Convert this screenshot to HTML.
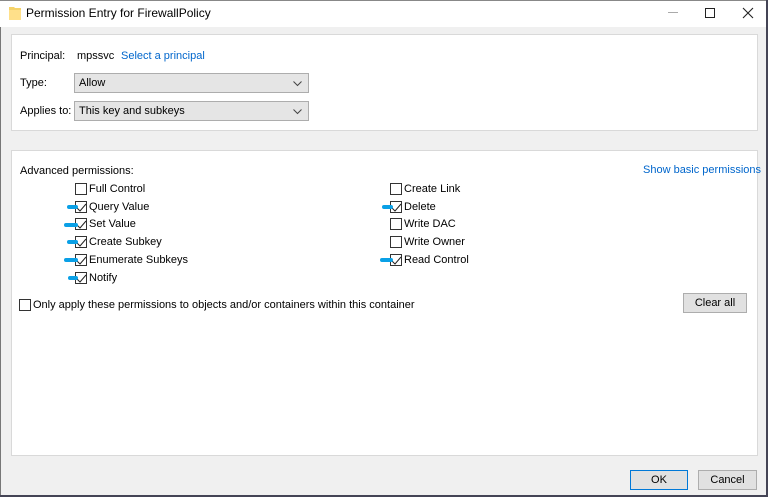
<!DOCTYPE html>
<html><head><meta charset="utf-8"><style>
*{margin:0;padding:0;box-sizing:border-box}
body{width:768px;height:497px;overflow:hidden;background:#f0f0f0;font-family:"Liberation Sans",sans-serif;font-size:11px;color:#000;position:relative}
.a{position:absolute;white-space:nowrap}
.panel{position:absolute;background:#fff;border:1px solid #d9d9d9}
.sel{position:absolute;background:#e5e5e5;border:1px solid #adadad;height:20px;padding:0 4px;line-height:18px;font-size:11px}
.sel svg{position:absolute;right:6px;top:7px}
.cb{position:absolute;width:12px;height:12px;border:1px solid #333;background:#fff}
.cb svg{position:absolute;left:0px;top:0px}
.btn{position:absolute;background:#e1e1e1;border:1px solid #adadad;text-align:center;line-height:18px;height:20px}
.link{color:#0066cc}
.scr{position:absolute;height:4px;background:#0aa0e6;border-radius:3px}
</style></head><body>
<div class="a" style="left:0;top:0;width:768px;height:27px;background:#fff"></div>
<div class="a" style="left:0;top:0;width:768px;height:1px;background:#888"></div>
<div class="a" style="left:0;top:27px;width:1px;height:470px;background:#777"></div>
<div class="a" style="left:766px;top:0;width:2px;height:497px;background:#445"></div>
<div class="a" style="left:0;top:495px;width:768px;height:2px;background:#445"></div>
<svg class="a" style="left:9px;top:6px" width="12" height="14"><path d="M0 1h5l1 1h6v12H0z" fill="#f5d36a"/><path d="M0 4h12v10H0z" fill="#ffe08a"/></svg>
<div class="a" style="left:26px;top:6px;font-size:12px">Permission Entry for FirewallPolicy</div>
<div class="a" style="left:668px;top:12px;width:10px;height:1px;background:#aaa"></div>
<div class="a" style="left:705px;top:8px;width:10px;height:10px;border:1px solid #222"></div>
<svg class="a" style="left:742px;top:7px" width="12" height="12"><path d="M1 1L11 11M11 1L1 11" stroke="#222" stroke-width="1.1"/></svg>

<div class="panel" style="left:11px;top:34px;width:747px;height:97px"></div>
<div class="a" style="left:20px;top:50px">Principal:</div>
<div class="a" style="left:77px;top:50px">mpssvc</div>
<div class="a link" style="left:121px;top:50px">Select a principal</div>
<div class="a" style="left:20px;top:77px">Type:</div>
<div class="sel" style="left:74px;top:73px;width:235px">Allow<svg width="9" height="6"><path d="M0.5 0.5L4.5 4.5L8.5 0.5" stroke="#444" fill="none"/></svg></div>
<div class="a" style="left:20px;top:105px">Applies to:</div>
<div class="sel" style="left:74px;top:101px;width:235px">This key and subkeys<svg width="9" height="6"><path d="M0.5 0.5L4.5 4.5L8.5 0.5" stroke="#444" fill="none"/></svg></div>

<div class="panel" style="left:11px;top:150px;width:747px;height:306px"></div>
<div class="a" style="left:20px;top:165px">Advanced permissions:</div>
<div class="a link" style="left:643px;top:164px">Show basic permissions</div>

<div class="cb" style="left:75px;top:183px"></div><div class="a" style="left:89px;top:183px">Full Control</div>
<div class="cb" style="left:75px;top:201px"><svg width="11" height="11"><path d="M1 6L4 9L10 2" stroke="#222" fill="none"/></svg></div><div class="a" style="left:89px;top:201px">Query Value</div>
<div class="cb" style="left:75px;top:218px"><svg width="11" height="11"><path d="M1 6L4 9L10 2" stroke="#222" fill="none"/></svg></div><div class="a" style="left:89px;top:218px">Set Value</div>
<div class="cb" style="left:75px;top:236px"><svg width="11" height="11"><path d="M1 6L4 9L10 2" stroke="#222" fill="none"/></svg></div><div class="a" style="left:89px;top:236px">Create Subkey</div>
<div class="cb" style="left:75px;top:254px"><svg width="11" height="11"><path d="M1 6L4 9L10 2" stroke="#222" fill="none"/></svg></div><div class="a" style="left:89px;top:254px">Enumerate Subkeys</div>
<div class="cb" style="left:75px;top:272px"><svg width="11" height="11"><path d="M1 6L4 9L10 2" stroke="#222" fill="none"/></svg></div><div class="a" style="left:89px;top:272px">Notify</div>

<div class="scr" style="left:67px;top:205px;width:11px"></div>
<div class="scr" style="left:64px;top:223px;width:14px"></div>
<div class="scr" style="left:67px;top:240px;width:11px"></div>
<div class="scr" style="left:64px;top:258px;width:14px"></div>
<div class="scr" style="left:68px;top:276px;width:10px"></div>

<div class="cb" style="left:390px;top:183px"></div><div class="a" style="left:404px;top:183px">Create Link</div>
<div class="cb" style="left:390px;top:201px"><svg width="11" height="11"><path d="M1 6L4 9L10 2" stroke="#222" fill="none"/></svg></div><div class="a" style="left:404px;top:201px">Delete</div>
<div class="cb" style="left:390px;top:218px"></div><div class="a" style="left:404px;top:218px">Write DAC</div>
<div class="cb" style="left:390px;top:236px"></div><div class="a" style="left:404px;top:236px">Write Owner</div>
<div class="cb" style="left:390px;top:254px"><svg width="11" height="11"><path d="M1 6L4 9L10 2" stroke="#222" fill="none"/></svg></div><div class="a" style="left:404px;top:254px">Read Control</div>
<div class="scr" style="left:382px;top:205px;width:11px"></div>
<div class="scr" style="left:380px;top:258px;width:13px"></div>

<div class="cb" style="left:19px;top:299px"></div><div class="a" style="left:33px;top:299px">Only apply these permissions to objects and/or containers within this container</div>
<div class="btn" style="left:683px;top:293px;width:64px">Clear all</div>

<div class="btn" style="left:630px;top:470px;width:58px;border:1px solid #0078d7">OK</div>
<div class="btn" style="left:698px;top:470px;width:59px">Cancel</div>
</body></html>
